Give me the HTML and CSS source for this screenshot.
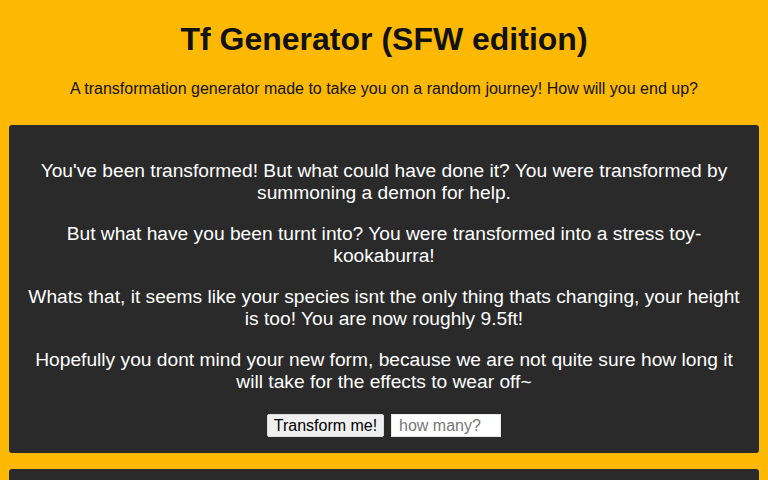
FILE: index.html
```html
<!DOCTYPE html>
<html lang="en">
<head>
    <meta charset="UTF-8">
    <meta name="viewport" content="width=device-width, initial-scale=1.0">
    <title>Tf Generator (SFW edition)</title>
    <link rel="stylesheet" href="styles.css">
</head>
<body>
    <h1>Tf Generator (SFW edition)</h1>
    <p class="intro">A transformation generator made to take you on a random journey! How will you end up?</p>

    <!-- Result box -->
    <div class="box" id="result">
        <p>You've been transformed! But what could have done it? You were transformed by summoning a demon for help.</p>
        <p>But what have you been turnt into? You were transformed into a stress toy-kookaburra!</p>
        <p>Whats that, it seems like your species isnt the only thing thats changing, your height is too! You are now roughly 9.5ft!</p>
        <p>Hopefully you dont mind your new form, because we are not quite sure how long it will take for the effects to wear off~</p>
        <div class="controls">
            <button id="go">Transform me!</button>
            <input type="text" id="count" placeholder="how many?">
        </div>
    </div>

    <div class="box"></div>
</body>
</html>
```

FILE: styles.css
```css
* {
    box-sizing: border-box;
}

body {
    margin: 0;
    padding: 0 9px;
    background-color: #fdb902;
    font-family: "Liberation Sans", Arial, sans-serif;
    color: #111;
    text-align: center;
}

h1 {
    margin: 21px 0 0;
    font-size: 32px;
    line-height: 37px;
}

.intro {
    margin: 22px 0 27px;
    font-size: 16px;
    line-height: 18px;
}

/* Dark result box */
.box {
    background-color: #2a2a2a;
    color: #fff;
    border-radius: 3px;
    padding: 16px 15px 16px;
    margin-bottom: 16px;
    min-height: 60px;
}

.box p {
    margin: 19px 0;
    font-size: 19.2px;
    line-height: 22px;
}

.controls {
    display: flex;
    justify-content: center;
    gap: 7px;
    padding-top: 2px;
}

.controls button {
    font-family: "Liberation Sans", Arial, sans-serif;
    font-size: 16px;
    width: 117px;
    height: 23px;
    padding: 0;
    background-color: #efefef;
    border: 1px solid #dcdcdc;
    border-radius: 2px;
    color: #000;
}

.controls input {
    font-family: "Liberation Sans", Arial, sans-serif;
    font-size: 16px;
    width: 110px;
    height: 23px;
    padding: 0 7px;
    background-color: #fff;
    border: 1px solid #e8e8e8;
    border-radius: 0;
}

.controls input::placeholder {
    color: #777;
}
```
